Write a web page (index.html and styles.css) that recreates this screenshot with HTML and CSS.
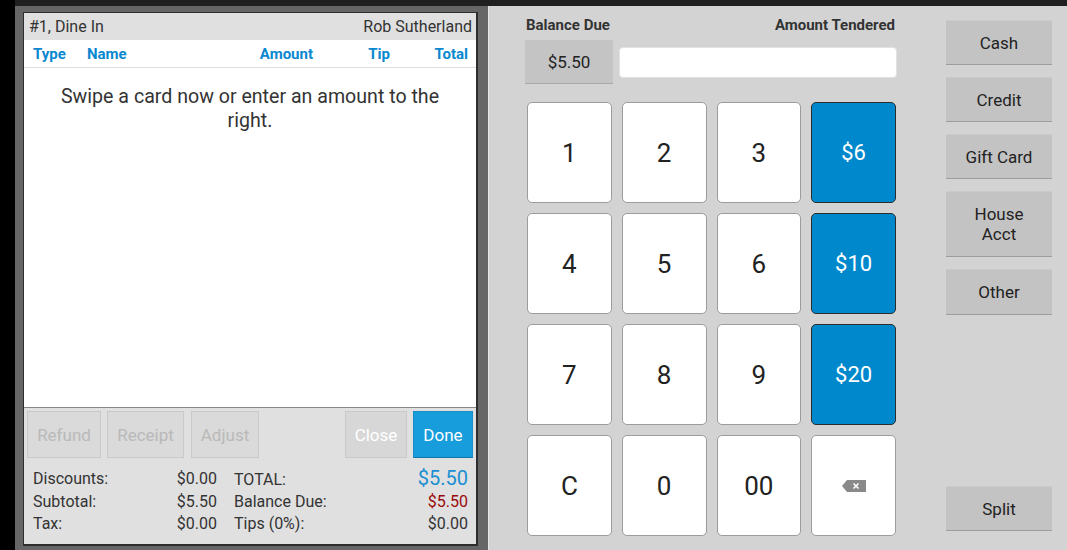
FILE: index.html
```html
<!DOCTYPE html>
<html>
<head>
<meta charset="utf-8">
<link rel="stylesheet" href="styles.css">
</head>
<body>
<div class="screen">
  <div class="edge"></div>
  <div class="main">
    <div class="topbar"></div>
    <div class="content">
      <div class="frame">
        <div class="panel">
          <div class="ticket-head">
            <span>#1, Dine In</span>
            <span>Rob Sutherland</span>
          </div>
          <div class="cols">
            <span>Type</span>
            <span>Name</span>
            <span class="r">Amount</span>
            <span class="r">Tip</span>
            <span class="r">Total</span>
          </div>
          <div class="list">
            <p class="hint">Swipe a card now or enter an amount to the right.</p>
          </div>
          <div class="actions">
            <button class="btn disabled w-refund">Refund</button>
            <button class="btn disabled w-receipt">Receipt</button>
            <button class="btn disabled w-adjust">Adjust</button>
            <span class="spacer"></span>
            <button class="btn close">Close</button>
            <button class="btn done">Done</button>
          </div>
          <div class="summary">
            <div class="srow first">
              <div class="pair"><span>Discounts:</span><span>$0.00</span></div>
              <div class="pair wide"><span>TOTAL:</span><span class="total">$5.50</span></div>
            </div>
            <div class="srow">
              <div class="pair"><span>Subtotal:</span><span>$5.50</span></div>
              <div class="pair wide"><span>Balance Due:</span><span class="due">$5.50</span></div>
            </div>
            <div class="srow">
              <div class="pair"><span>Tax:</span><span>$0.00</span></div>
              <div class="pair wide"><span>Tips (0%):</span><span>$0.00</span></div>
            </div>
          </div>
        </div>
      </div>
      <div class="pay">
        <div class="pad-col">
          <div class="labels">
            <span>Balance Due</span>
            <span>Amount Tendered</span>
          </div>
          <div class="amounts">
            <div class="balance">$5.50</div>
            <div class="tendered"></div>
          </div>
          <div class="keypad">
            <button class="key">1</button>
            <button class="key">2</button>
            <button class="key">3</button>
            <button class="key quick">$6</button>
            <button class="key">4</button>
            <button class="key">5</button>
            <button class="key">6</button>
            <button class="key quick">$10</button>
            <button class="key">7</button>
            <button class="key">8</button>
            <button class="key">9</button>
            <button class="key quick">$20</button>
            <button class="key">C</button>
            <button class="key">0</button>
            <button class="key">00</button>
            <button class="key">
              <svg width="24" height="12" viewBox="0 0 24 12"><polygon points="0,6 5,0 24,0 24,12 5,12" fill="#8a8a8a"/><path d="M11.5 3.5 L16.5 8.5 M16.5 3.5 L11.5 8.5" stroke="#fff" stroke-width="1.6"/></svg>
            </button>
          </div>
        </div>
        <div class="tenders">
          <button class="tender">Cash</button>
          <button class="tender">Credit</button>
          <button class="tender">Gift Card</button>
          <button class="tender tall">House<br>Acct</button>
          <button class="tender other">Other</button>
          <button class="tender split">Split</button>
        </div>
      </div>
    </div>
  </div>
</div>
</body>
</html>
```
FILE: styles.css
```css
* { box-sizing: border-box; }
html, body { margin: 0; padding: 0; }
body {
  width: 1067px;
  height: 550px;
  overflow: hidden;
  font-family: Roboto, "Liberation Sans", sans-serif;
  color: #333;
}
button { font-family: inherit; margin: 0; cursor: default; }
.screen { display: flex; width: 1067px; height: 550px; }
.edge { width: 15px; background: #000; }
.main { flex: 1; display: flex; flex-direction: column; }
.topbar { height: 6px; background: #202020; }
.content { flex: 1; display: flex; }

.frame {
  width: 473px;
  background: #666;
  padding: 6px 0 0 8px;
}
.panel {
  width: 455px;
  height: 534px;
  border: 1px solid #2e2e2e;
  border-right-width: 2px;
  border-bottom-width: 2px;
  display: flex;
  flex-direction: column;
  background: #e0e0e0;
}
.ticket-head {
  height: 27px;
  flex: none;
  display: flex;
  justify-content: space-between;
  align-items: center;
  padding: 0 4px 0 5px;
  font-size: 16px;
  color: #333;
  background: #e0e0e0;
}
.cols {
  height: 28px;
  flex: none;
  background: #fff;
  border-bottom: 1px solid #ddd;
  display: grid;
  grid-template-columns: 54px 136px 90px 77px 78px;
  align-items: center;
  padding: 0 9px;
  font-size: 15px;
  font-weight: bold;
  color: #0a88cf;
}
.cols .r { text-align: right; }
.list {
  flex: 1;
  background: #fff;
  border-bottom: 1px solid #888;
  padding: 17px 20px 0;
}
.hint {
  margin: 0;
  text-align: center;
  font-size: 19.6px;
  line-height: 24px;
  color: #333;
}
.actions {
  height: 53px;
  flex: none;
  display: flex;
  align-items: flex-start;
  gap: 6px;
  padding: 3px 3px 0 3px;
}
.spacer { flex: 1; }
.btn {
  height: 47px;
  font-size: 17px;
  border: 1px solid #c9c9c9;
  background: #dadada;
  color: #b9b9b9;
  padding: 0;
}
.w-refund { width: 74px; }
.w-receipt { width: 77px; }
.w-adjust { width: 68px; margin-left: 1px; }
.close { width: 62px; background: #d7d7d7; color: #fff; }
.done {
  width: 60px;
  background: #179cdc;
  border: 1px solid #168fca;
  border-bottom-color: #0f77aa;
  color: #fff;
}
.summary {
  flex: none;
  height: 83px;
  padding: 5px 8px 0 9px;
  font-size: 16px;
  color: #333;
}
.srow { display: flex; height: 22px; align-items: center; }
.srow.first { height: 24px; }
.pair { display: flex; justify-content: space-between; width: 184px; }
.pair.wide { flex: 1; margin-left: 17px; align-items: baseline; }
.total { font-size: 20px; color: #1a8fd2; }
.due { color: #9a0a0a; }

.pay {
  flex: 1;
  background: #d3d3d3;
  border-left: 1px solid #e6e6e6;
  display: flex;
  padding: 0 15px 0 36px;
}
.pad-col { width: 372px; display: flex; flex-direction: column; }
.labels {
  display: flex;
  justify-content: space-between;
  padding: 11px 2px 0 1px;
  line-height: 17px;
  font-size: 15px;
  font-weight: bold;
  color: #333;
}
.amounts {
  margin-top: 6px;
  display: flex;
  align-items: center;
  gap: 6px;
}
.balance {
  width: 88px;
  height: 44px;
  background: #c4c4c4;
  border-bottom: 1px solid #a8a8a8;
  display: flex;
  align-items: center;
  justify-content: center;
  font-size: 17px;
  color: #222;
}
.tendered {
  flex: 1;
  height: 31px;
  background: #fff;
  border: 1px solid #e2e2e2;
  border-radius: 4px;
  margin-top: 1px;
}
.keypad {
  margin: 18px 0 0 2px;
  width: 369px;
  display: grid;
  grid-template-columns: repeat(4, 1fr);
  grid-auto-rows: 101px;
  gap: 10px 10px;
}
.key {
  background: #fff;
  border: 1px solid #9c9c9c;
  border-radius: 5px;
  font-size: 26px;
  color: #222;
  display: flex;
  align-items: center;
  justify-content: center;
  padding: 0;
}
.key.quick {
  background: #0088cc;
  border-color: #2c2c2c;
  color: #fff;
  font-size: 22px;
}
.tenders {
  margin-left: 49px;
  width: 106px;
  display: flex;
  flex-direction: column;
  gap: 12px;
  padding: 14px 0 19px;
}
.tender {
  height: 45px;
  flex: none;
  background: #c3c3c3;
  border: none;
  border-bottom: 1px solid #9d9d9d;
  border-top: 1px solid #cbcbcb;
  font-size: 17px;
  color: #222;
  padding: 0;
  line-height: 20px;
}
.tender.tall { height: 66px; }
.tender.other { height: 46px; }
.tender.split { margin-top: auto; }
```
